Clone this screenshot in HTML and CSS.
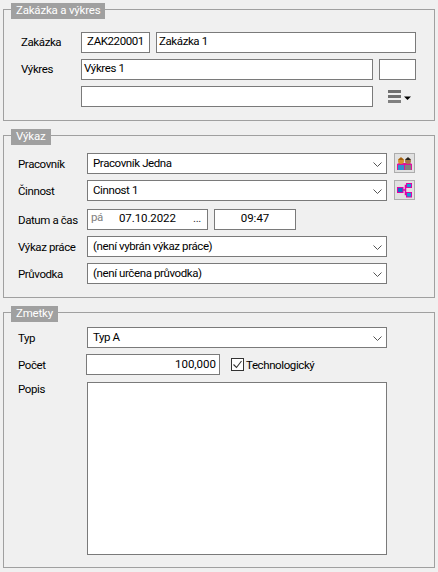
FILE: index.html
```html
<!DOCTYPE html>
<html lang="cs">
<head>
<meta charset="utf-8">
<title>Zmetky</title>
<link rel="stylesheet" href="styles.css">
</head>
<body>
<section class="group group-order">
  <div class="legend">Zakázka a výkres</div>
  <div class="row">
    <span class="label label-wide">Zakázka</span>
    <div class="field center w-code">ZAK220001</div>
    <div class="field grow">Zakázka 1</div>
  </div>
  <div class="row">
    <span class="label label-wide">Výkres</span>
    <div class="field w-draw">Výkres 1</div>
    <div class="field w-small"></div>
  </div>
  <div class="row">
    <span class="label label-wide"></span>
    <div class="field w-draw"></div>
    <svg class="menu-icon" width="25" height="16" viewBox="0 0 25 16">
      <rect x="1" y="1" width="13" height="3" fill="#707070"/>
      <rect x="1" y="6" width="13" height="3" fill="#707070"/>
      <rect x="1" y="11" width="13" height="3" fill="#808080"/>
      <path d="M17 7.5h7l-3.500 3.500z" fill="#000"/>
    </svg>
  </div>
</section>

<section class="group group-report">
  <div class="legend">Výkaz</div>
  <div class="row">
    <span class="label">Pracovník</span>
    <div class="select">Pracovník Jedna<svg class="chevron" width="9" height="5" viewBox="0 0 9 5"><path d="M.5.500l4 4 4-4" fill="none" stroke="#555"/></svg></div>
    <button class="tool" type="button">
      <svg width="15" height="15" viewBox="0 0 15 15">
        <path d="M0 14V8l2-1h11l2 1v6z" fill="#e0109c"/>
        <rect x="1" y="9" width="6" height="5" fill="#2f8fd0"/>
        <rect x="8" y="9" width="6" height="5" fill="#808080"/>
        <circle cx="4" cy="5" r="3" fill="#d89030"/>
        <circle cx="11" cy="5" r="3" fill="#a87848"/>
        <path d="M8 4l3-3 3 3z" fill="#222"/>
        <path d="M1 4l3-3 3 3z" fill="#a06010"/>
      </svg>
    </button>
  </div>
  <div class="row">
    <span class="label">Činnost</span>
    <div class="select">Cinnost 1<svg class="chevron" width="9" height="5" viewBox="0 0 9 5"><path d="M.5.500l4 4 4-4" fill="none" stroke="#555"/></svg></div>
    <button class="tool" type="button">
      <svg width="15" height="15" viewBox="0 0 15 15">
        <path d="M6 7h2.500V2.500H10M8.500 7v4.500H10" fill="none" stroke="#e000a8" stroke-width="1.500"/>
        <rect x=".5" y="4.500" width="5.500" height="5" fill="#1070c8" stroke="#e000a8"/>
        <rect x="9.500" y=".5" width="5" height="4" fill="#10a0d8" stroke="#e000a8"/>
        <rect x="9.500" y="9.500" width="5" height="4.500" fill="#10a0d8" stroke="#e000a8"/>
      </svg>
    </button>
  </div>
  <div class="row row-date">
    <span class="label">Datum a čas</span>
    <div class="field date">
      <span class="weekday">pá</span>
      <span class="date-value">07.10.2022</span>
      <span class="dots">...</span>
    </div>
    <div class="field center time">09:47</div>
  </div>
  <div class="row">
    <span class="label">Výkaz práce</span>
    <div class="select">(není vybrán výkaz práce)<svg class="chevron" width="9" height="5" viewBox="0 0 9 5"><path d="M.5.500l4 4 4-4" fill="none" stroke="#555"/></svg></div>
  </div>
  <div class="row">
    <span class="label">Průvodka</span>
    <div class="select">(není určena průvodka)<svg class="chevron" width="9" height="5" viewBox="0 0 9 5"><path d="M.5.500l4 4 4-4" fill="none" stroke="#555"/></svg></div>
  </div>
</section>

<section class="group group-scrap">
  <div class="legend">Zmetky</div>
  <div class="row">
    <span class="label">Typ</span>
    <div class="select">Typ A<svg class="chevron" width="9" height="5" viewBox="0 0 9 5"><path d="M.5.500l4 4 4-4" fill="none" stroke="#555"/></svg></div>
  </div>
  <div class="row">
    <span class="label label-count">Počet</span>
    <div class="field right count">100,000</div>
    <div class="check">
      <svg class="check-box" width="13" height="13" viewBox="0 0 13 13">
        <rect x=".5" y=".5" width="12" height="12" fill="#fff" stroke="#333"/>
        <path d="M2.500 6.500l3 3 5-6.500" fill="none" stroke="#333" stroke-width="1.100"/>
      </svg>
      <span>Technologický</span>
    </div>
  </div>
  <div class="row row-notes">
    <span class="label label-top">Popis</span>
    <div class="notes"></div>
  </div>
</section>
</body>
</html>
```
FILE: styles.css
```css
* { box-sizing: border-box; }

html, body { height: 100%; }

body {
  margin: 0;
  padding: 9px 3px 0;
  background: #f0f0f0;
  color: #000;
  font: 11.5px/16px Roboto, "Liberation Sans", Arial, sans-serif;
  letter-spacing: -0.4px;
  overflow: hidden;
  display: flex;
  flex-direction: column;
  gap: 14px;
}

.group {
  border: 1px solid #a0a0a0;
  padding: 0 14px 13px;
  display: flex;
  flex-direction: column;
  gap: 6px;
}

.group-order { padding: 0 18px 13px 17px; }
.group-scrap { padding-bottom: 12px; height: 256px; }

.legend {
  align-self: flex-start;
  height: 16px;
  margin: -7px 0 2px -7px;
  padding: 0 5px;
  background: #a0a0a0;
  color: #fff;
  line-height: 15px;
  letter-spacing: -0.2px;
}

.group-order .legend { margin: -7px 0 7px -10px; }
.group-scrap .legend { margin-bottom: -1px; }

.row {
  display: flex;
  align-items: center;
  height: 21px;
  flex: none;
}

.row-date { margin-top: 2px; }
.row-notes {
  flex: 1;
  align-items: stretch;
  margin-top: 1px;
}

.label {
  width: 69px;
  flex: none;
  white-space: nowrap;
}
.label-wide { width: 60px; padding-bottom: 1px; }
.label-count { width: 68px; }
.label-top { margin-top: -1px; }

.field,
.select,
.notes {
  height: 21px;
  border: 1px solid #7a7a7a;
  background: #fff;
  flex: none;
}

.field {
  padding: 0 2px;
  line-height: 17px;
  white-space: nowrap;
}

.center { text-align: center; }
.right { text-align: right; padding-right: 3px; }
.grow { flex: 1; margin-left: 6px; }

.w-code { width: 69px; }
.w-draw { width: 292px; }
.w-small { width: 37px; margin-left: 6px; }

.menu-icon { margin-left: 14px; margin-top: 1px; flex: none; }

.select {
  width: 300px;
  position: relative;
  padding-left: 5px;
  line-height: 18px;
}

.chevron {
  position: absolute;
  right: 4px;
  top: 8px;
}

.tool {
  width: 21px;
  height: 20px;
  margin: 0 0 1px 7px;
  padding: 0;
  border: 1px solid #adadad;
  background: #e1e1e1;
  display: flex;
  align-items: center;
  justify-content: center;
}

.date {
  width: 121px;
  display: flex;
  padding-left: 3px;
}

.weekday { width: 28px; color: #808080; line-height: 15px; }
.date-value { width: 74px; letter-spacing: -0.1px; }
.dots { color: #333; }

.time { width: 82px; margin-left: 6px; letter-spacing: 0; }

.count { width: 134px; line-height: 18px; letter-spacing: 0; }

.check {
  display: flex;
  align-items: center;
  margin-left: 11px;
  gap: 2px;
}

.check-box { flex: none; }

.notes {
  width: 300px;
  height: auto;
}
```
